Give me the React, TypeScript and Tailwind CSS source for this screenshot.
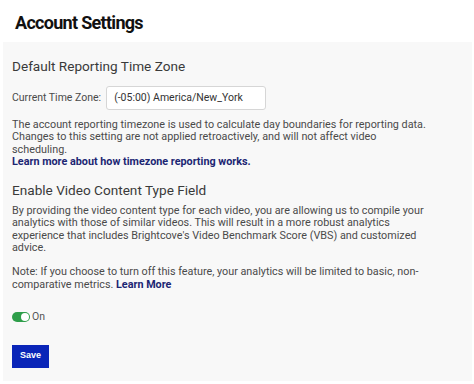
export default function App() {
  return (
    <div className="w-[474px] h-[384px] bg-white overflow-hidden font-['Roboto',sans-serif] text-[#4a4a4a]">
      <h1 className="pl-[15px] pt-[9px] h-[42px] text-[18px] font-bold tracking-[-0.7px] text-[#111]">
        Account Settings
      </h1>
      <div className="ml-[3px] mr-[2px] h-[339px] bg-[#f8f8f8] px-[9px] pt-[14px]">
        <h2 className="text-[13.6px] text-[#3a3a3a] leading-[20px]">Default Reporting Time Zone</h2>
        <div className="mt-[10px] flex items-center gap-[5px]">
          <span className="text-[10.5px] leading-[14px]">Current Time Zone:</span>
          <div className="w-[160px] h-[24px] bg-white border border-[#d6d6d6] rounded-[3px] flex items-center px-[7px] text-[10.5px] text-[#333]">
            (-05:00) America/New_York
          </div>
        </div>
        <p className="mt-[9px] text-[10.8px] leading-[12.3px] whitespace-nowrap">
          The account reporting timezone is used to calculate day boundaries for reporting data.
          <br />
          Changes to this setting are not applied retroactively, and will not affect video
          <br />
          scheduling.
          <br />
          <a className="font-bold text-[#1c2673]">Learn more about how timezone reporting works.</a>
        </p>
        <h2 className="mt-[12px] text-[13.6px] text-[#3a3a3a] leading-[20px]">Enable Video Content Type Field</h2>
        <p className="mt-[5px] text-[10.8px] leading-[12.3px] whitespace-nowrap">
          By providing the video content type for each video, you are allowing us to compile your
          <br />
          analytics with those of similar videos. This will result in a more robust analytics
          <br />
          experience that includes Brightcove's Video Benchmark Score (VBS) and customized
          <br />
          advice.
        </p>
        <p className="mt-[12px] text-[10.8px] leading-[12.3px] whitespace-nowrap">
          Note: If you choose to turn off this feature, your analytics will be limited to basic, non-
          <br />
          comparative metrics. <a className="font-bold text-[#1c2673]">Learn More</a>
        </p>
        <div className="mt-[18px] flex items-center gap-[2px]">
          <div className="w-[18px] h-[10px] rounded-full bg-[#2e9e4a] flex items-center justify-end pr-[1px]">
            <div className="w-[8px] h-[8px] rounded-full bg-white" />
          </div>
          <span className="text-[10.5px] text-[#555]">On</span>
        </div>
        <button className="mt-[20px] w-[37px] h-[23px] bg-[#0a25b8] text-white text-[9px] font-bold font-['Liberation_Sans',sans-serif]">
          Save
        </button>
      </div>
    </div>
  );
}
